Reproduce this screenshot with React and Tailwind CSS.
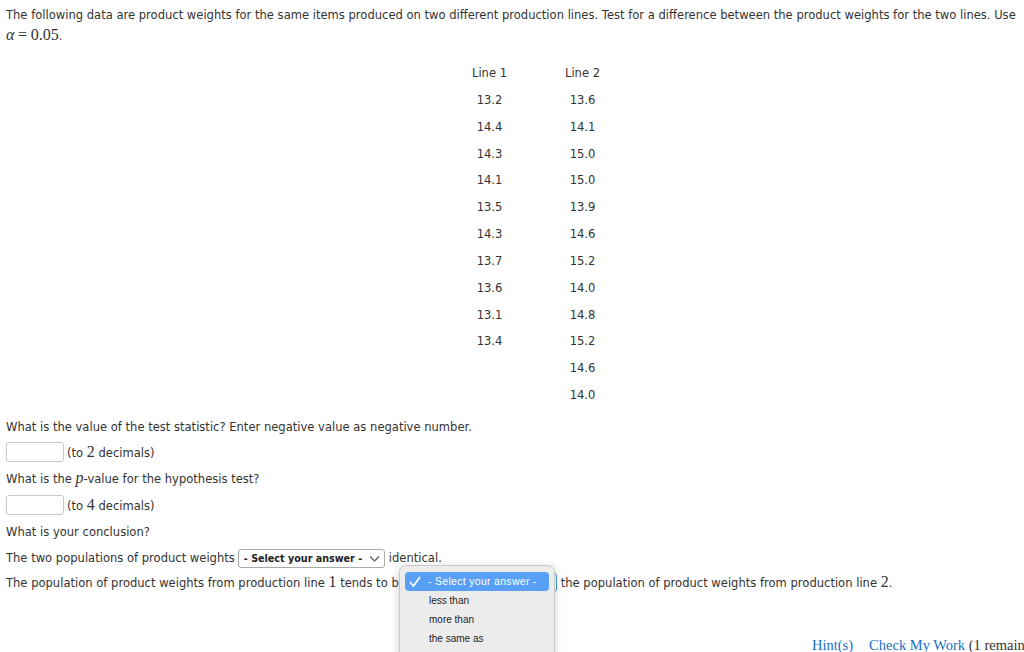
const line1 = ["13.2", "14.4", "14.3", "14.1", "13.5", "14.3", "13.7", "13.6", "13.1", "13.4", "", ""];
const line2 = ["13.6", "14.1", "15.0", "15.0", "13.9", "14.6", "15.2", "14.0", "14.8", "15.2", "14.6", "14.0"];

const M = ({ children, italic }) => (
  <span className={"font-['Liberation_Serif','DejaVu_Serif',serif] text-[16px] " + (italic ? "italic" : "")}>{children}</span>
);

const Input = () => (
  <span className="inline-block w-[58px] h-[20px] border border-[#c8c8c8] rounded-[3px] bg-white align-middle"></span>
);

export default function App() {
  return (
    <div className="w-[1024px] h-[652px] overflow-hidden bg-white text-[#333] font-['DejaVu_Sans','Verdana',sans-serif] text-[11.55px] relative">
      <div className="px-[6px] pt-[6px]">
        <p className="leading-[19px] whitespace-nowrap">
          The following data are product weights for the same items produced on two different production lines. Test for a difference between the product weights for the two lines. Use
          <br />
          <M italic>α</M> <M>=</M> <M>0.05</M>.
        </p>

        <div className="ml-[437px] mt-[17px] grid grid-cols-[93px_93px] text-center">
          <div className="h-[26.85px] leading-[20px]">Line 1</div>
          <div className="h-[26.85px] leading-[20px]">Line 2</div>
          {line2.map((v, i) => (
            <>
              <div key={"a" + i} className="h-[26.85px] leading-[20px]">{line1[i]}</div>
              <div key={"b" + i} className="h-[26.85px] leading-[20px]">{v}</div>
            </>
          ))}
        </div>

        <div className="mt-[6px] leading-[19px]">
          <p>What is the value of the test statistic? Enter negative value as negative number.</p>
          <p className="mt-[5px] flex items-center gap-[3px]">
            <Input />
            <span>(to <M>2</M> decimals)</span>
          </p>
          <p className="mt-[5px]">What is the <M italic>p</M>-value for the hypothesis test?</p>
          <p className="mt-[6px] flex items-center gap-[3px]">
            <Input />
            <span>(to <M>4</M> decimals)</span>
          </p>
          <p className="mt-[7px]">What is your conclusion?</p>
          <p className="mt-[7px] flex items-center">
            <span>The two populations of product weights</span>
            <span className="ml-[3px] inline-flex items-center h-[19px] w-[147px] border border-[#aaa] rounded-[3px] pl-[5px] pr-[3px] text-[9.6px] font-bold text-[#222]">
              - Select your answer -
              <svg className="ml-auto" width="13" height="13" viewBox="0 0 13 13" fill="none" stroke="#555" strokeWidth="1.1">
                <path d="M2 4.5 L6.5 9 L11 4.5" />
              </svg>
            </span>
            <span className="ml-[4px]">identical.</span>
          </p>
          <p className="mt-[4px] flex items-center">
            <span>The population of product weights from production line <M>1</M> tends to b</span>
            <span className="ml-[3px] inline-block w-[155px] h-[19px] border border-[#4a90e2] rounded-[3px] shrink-0"></span>
            <span className="ml-[4px]">the population of product weights from production line <M>2</M>.</span>
          </p>
        </div>
      </div>

      <div className="absolute left-[399px] top-[565px] w-[156px] h-[100px] rounded-[7px] border border-[#c9c9c9] bg-[#ececec] shadow-[0_2px_8px_rgba(0,0,0,0.18)] px-[5px] pt-[6px] font-['Liberation_Sans','Arial',sans-serif] text-[10px] text-[#222]">
        <div className="flex items-center h-[19px] rounded-[4px] bg-[#58a0f6] text-white pl-[4px]">
          <svg width="12" height="12" viewBox="0 0 12 12" fill="none" stroke="white" strokeWidth="1.8" strokeLinecap="round" strokeLinejoin="round">
            <path d="M1.5 6.5 L4.5 10 L10.5 1.5" />
          </svg>
          <span className="ml-[7px] text-[10.5px] tracking-[0.3px]">- Select your answer -</span>
        </div>
        <div className="pl-[24px] h-[19px] leading-[19px]">less than</div>
        <div className="pl-[24px] h-[19px] leading-[19px]">more than</div>
        <div className="pl-[24px] h-[19px] leading-[19px]">the same as</div>
      </div>

      <div className="absolute left-[812px] top-[635px] font-['Liberation_Serif','DejaVu_Serif',serif] text-[14.5px] whitespace-nowrap">
        <span className="text-[#1a6fc4]">Hint(s)</span>
        <span className="ml-[16px] text-[#1a6fc4]">Check My Work</span>
        <span className="text-[#333]"> (1 remaining)</span>
      </div>
    </div>
  );
}
